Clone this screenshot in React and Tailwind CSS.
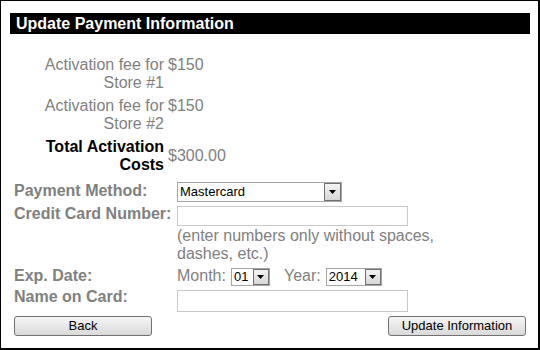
import React from "react";

function Arrow() {
  return (
    <div className="h-full w-[17px] shrink-0 border border-[#707070] bg-linear-to-b from-[#f4f4f4] to-[#d6d6d6] flex items-center justify-center">
      <svg width="7" height="4" viewBox="0 0 7 4">
        <polygon points="0,0 7,0 3.5,4" fill="#000" />
      </svg>
    </div>
  );
}

function Select({ value, w, bw = "w-[17px]" }) {
  return (
    <div className={`${w} flex items-stretch border border-[#a5a5a5] bg-white h-full`}>
      <div className="flex-1 pl-[2px] text-[13px] leading-[16px] text-black flex items-center overflow-hidden whitespace-nowrap">
        {value}
      </div>
      <div className={`${bw} shrink-0 border border-[#707070] bg-linear-to-b from-[#f4f4f4] to-[#d6d6d6] flex items-center justify-center`}>
        <svg width="7" height="4" viewBox="0 0 7 4">
          <polygon points="0,0 7,0 3.5,4" fill="#000" />
        </svg>
      </div>
    </div>
  );
}

export default function App() {
  return (
    <div className="w-[540px] h-[350px] bg-white border-l border-t border-r-2 border-b-2 border-black font-['Liberation_Sans',Arial,sans-serif] text-[16px] leading-[18px] overflow-hidden">
      <div className="pt-[12px] pl-[9px] pr-[8px]">
        <div className="h-[21px] bg-black flex items-center pl-[6px] text-white font-bold">
          Update Payment Information
        </div>
      </div>

      <div className="mt-[22px] ml-[43px] flex flex-col gap-[5px] text-[#808080]">
        <div className="flex gap-[4px] items-start">
          <div className="w-[120px] text-right whitespace-nowrap">
            Activation fee for<br />Store #1
          </div>
          <div>$150</div>
        </div>
        <div className="flex gap-[4px] items-start">
          <div className="w-[120px] text-right whitespace-nowrap">
            Activation fee for<br />Store #2
          </div>
          <div>$150</div>
        </div>
        <div className="flex gap-[4px] items-center">
          <div className="w-[120px] text-right whitespace-nowrap font-bold text-black">
            Total Activation<br />Costs
          </div>
          <div>$300.00</div>
        </div>
      </div>

      <div className="mt-[8px] pl-[13px] pr-[12px] text-[#808080]">
        <div className="grid grid-cols-[163px_1fr]">
          <div className="font-bold">Payment Method:</div>
          <div className="h-[20px]">
            <Select value="Mastercard" w="w-[165px]" />
          </div>

          <div className="font-bold mt-[3px]">Credit Card Number:</div>
          <div className="mt-[3px]">
            <div className="mt-px h-[20px] w-[231px] border border-[#c8c8c8] bg-white" />
            <div className="mt-px whitespace-nowrap">
              (enter numbers only without spaces,<br />dashes, etc.)
            </div>
          </div>

          <div className="font-bold mt-[4px]">Exp. Date:</div>
          <div className="mt-[4px] flex items-start">
            <span>Month:</span>
            <div className="ml-[5px] mt-px h-[18px]">
              <Select value="01" w="w-[39px]" bw="w-[16px]" />
            </div>
            <span className="ml-[14px]">Year:</span>
            <div className="ml-[5px] mt-px h-[18px]">
              <Select value="2014" w="w-[56px]" bw="w-[16px]" />
            </div>
          </div>

          <div className="font-bold mt-[2px]">Name on Card:</div>
          <div className="mt-[2px]">
            <div className="mt-[2px] h-[22px] w-[231px] border border-[#c8c8c8] bg-white" />
          </div>
        </div>

        <div className="mt-[4px] flex justify-between">
          <button className="w-[138px] h-[20px] rounded-[3px] border border-[#707070] bg-linear-to-b from-[#f6f6f6] to-[#d9d9d9] text-[13px] leading-[16px] text-black">
            Back
          </button>
          <button className="w-[138px] h-[20px] rounded-[3px] border border-[#707070] bg-linear-to-b from-[#f6f6f6] to-[#d9d9d9] text-[13px] leading-[16px] text-black">
            Update Information
          </button>
        </div>
      </div>
    </div>
  );
}
